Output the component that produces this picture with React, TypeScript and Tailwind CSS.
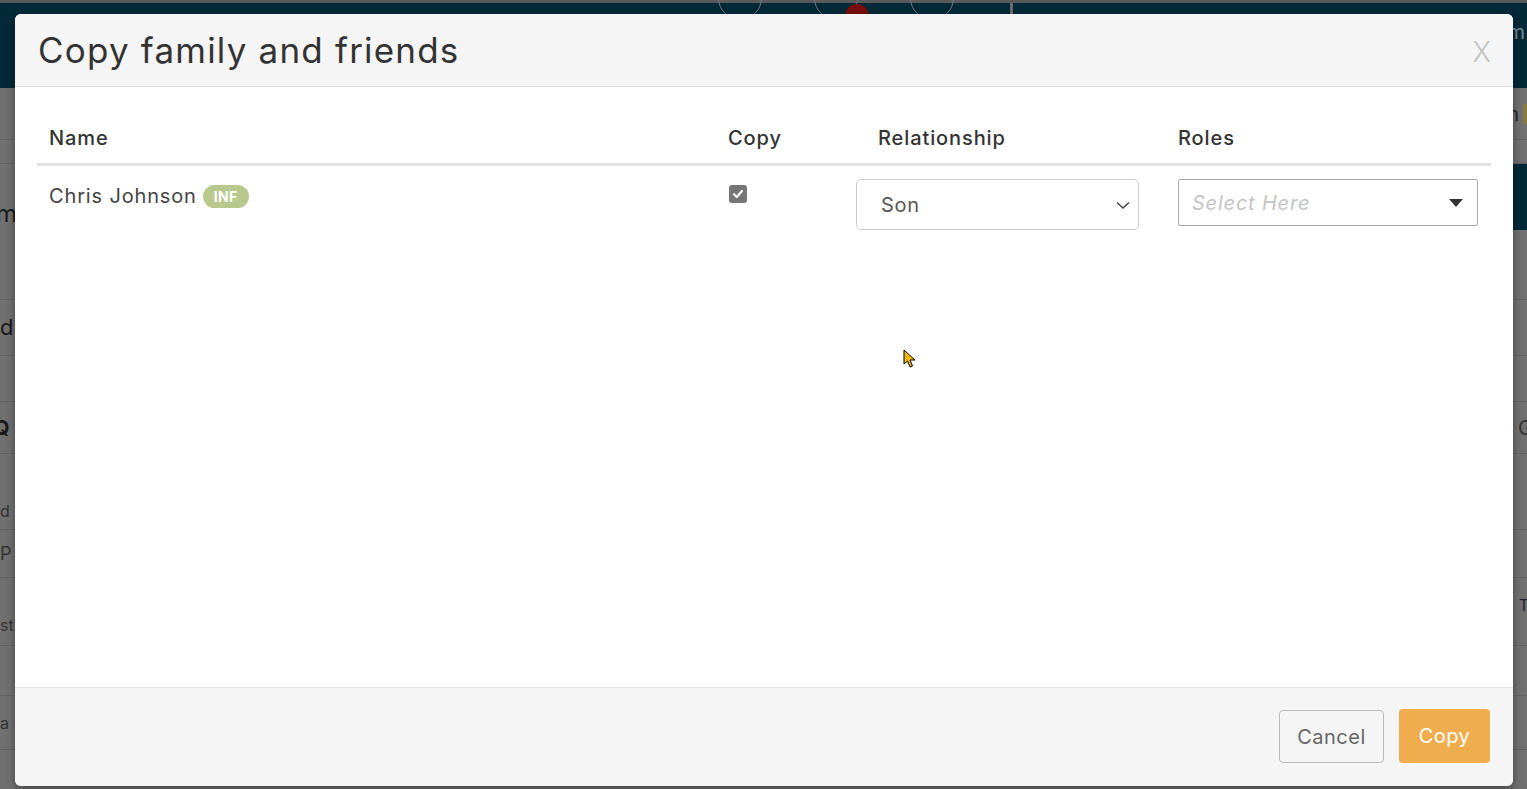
import React from "react";

export default function App() {
  return (
    <div className="relative w-full h-[789px] overflow-hidden bg-[#707070]" style={{ fontFamily: "Inter, 'Open Sans', sans-serif" }}>
      {/* dimmed background page */}
      <div className="h-[88px] bg-[#032837] border-t-[3px] border-[#5a5a5a] flex items-start">
        <div className="ml-[718px] flex gap-[52px] -mt-[27px]">
          <div className="w-[44px] h-[44px] rounded-full border border-[#6b7b82]" />
          <div className="relative w-[44px] h-[44px] rounded-full border border-[#6b7b82]">
            <div className="absolute left-[30px] top-[27px] w-[24px] h-[24px] rounded-full bg-[#7a0d0d]" />
          </div>
          <div className="w-[44px] h-[44px] rounded-full border border-[#6b7b82]" />
        </div>
        <div className="ml-[56px] w-[3px] h-[12px] bg-[#6b6b6b]" />
        <div className="ml-auto mr-[2px] mt-[14px] text-[20px] text-[#7a8a90]">m</div>
      </div>
      <div className="h-[52px] border-b border-[#626262] flex justify-end items-center">
        <span className="text-[20px] text-[#2a2a2a] mr-[4px]">n</span>
        <span className="w-[4px] h-[20px] bg-[#8a7a40]" />
      </div>
      <div className="h-[24px] border-b border-[#626262]" />
      <div className="h-[66px] flex">
        <span className="text-[24px] text-[#1a1a1a] mt-[32px] -ml-[4px]">m</span>
        <div className="ml-auto w-[320px] bg-[#032837]" />
      </div>
      <div className="h-[70px] border-b border-[#626262]" />
      <div className="h-[56px] border-b border-[#626262] flex items-center text-[22px] text-[#1a1a1a]">d</div>
      <div className="h-[46px] border-b border-[#626262]" />
      <div className="h-[52px] border-b border-[#626262] flex items-center justify-between text-[20px] text-[#1a1a1a]">
        <span className="-ml-[6px] font-bold">Q</span>
        <span className="-mr-[6px] text-[#333]">G</span>
      </div>
      <div className="h-[76px] border-b border-[#626262] flex items-end pb-[6px] text-[16px] text-[#333]">d</div>
      <div className="h-[48px] border-b border-[#626262] flex items-center text-[18px] text-[#333]">P</div>
      <div className="h-[68px] border-b border-[#626262] flex items-end pb-[8px] justify-between text-[16px] text-[#333]">
        <span>st</span>
        <span className="-mr-[2px] mb-[20px] text-[#223]">T</span>
      </div>
      <div className="h-[50px] border-b border-[#626262]" />
      <div className="h-[54px] border-b border-[#626262] flex items-center text-[16px] text-[#333]">a</div>

      {/* modal */}
      <div className="absolute left-[15px] top-[14px] w-[1498px] h-[772px] bg-white rounded-[6px] overflow-hidden flex flex-col shadow-[0_3px_9px_rgba(0,0,0,0.4)]">
        <div className="h-[73px] shrink-0 bg-[#f5f5f5] border-b border-[#dddddd] flex items-center justify-between pl-[23px] pr-[22px]">
          <h1 className="text-[35px] font-normal text-[#333333] tracking-[1.2px] leading-none">Copy family and friends</h1>
          <span className="text-[28px] text-[#c2c2c2] leading-none font-light mt-[4px]">X</span>
        </div>
        <div className="flex-1 px-[22px] pt-[36px]">
          <div className="grid grid-cols-[679px_150px_300px_1fr] border-b-[3px] border-[#e2e2e2] h-[43px] text-[20px] font-medium text-[#333333] tracking-[0.9px]">
            <div className="pl-[12px]">Name</div>
            <div className="pl-[12px]">Copy</div>
            <div className="pl-[12px]">Relationship</div>
            <div className="pl-[12px]">Roles</div>
          </div>
          <div className="grid grid-cols-[679px_140px_322px_1fr] pt-[13px]">
            <div className="pl-[12px] flex items-center gap-[6px] h-[30px] mt-[2px]">
              <span className="text-[20px] text-[#444444] tracking-[0.85px]">Chris Johnson</span>
              <span className="h-[23px] px-[11px] rounded-full bg-[#b9c98e] text-white text-[14px] font-bold flex items-center tracking-[0.3px]">INF</span>
            </div>
            <div className="pl-[13px] pt-[6px]">
              <div className="w-[18px] h-[18px] rounded-[3px] bg-[#767676] flex items-center justify-center">
                <svg width="12" height="12" viewBox="0 0 12 12">
                  <path d="M2 6.2 L4.8 9 L10 3" fill="none" stroke="white" strokeWidth="2.2" strokeLinecap="round" strokeLinejoin="round" />
                </svg>
              </div>
            </div>
            <div>
              <div className="w-[283px] h-[51px] border border-[#cccccc] rounded-[5px] flex items-center justify-between pl-[24px] pr-[7px]">
                <span className="text-[20px] text-[#555555] tracking-[0.7px]">Son</span>
                <svg width="16" height="10" viewBox="0 0 16 10">
                  <path d="M2 2.5 L8 8 L14 2.5" fill="none" stroke="#444" strokeWidth="1.5" />
                </svg>
              </div>
            </div>
            <div>
              <div className="w-[300px] h-[47px] border border-[#a9a9a9] rounded-[2px] flex items-center justify-between pl-[13px] pr-[13px]">
                <span className="text-[20px] italic text-[#c4c4c4] tracking-[0.8px]">Select Here</span>
                <svg width="16" height="10" viewBox="0 0 16 10">
                  <path d="M1 1 L15 1 L8 9 Z" fill="#333" />
                </svg>
              </div>
            </div>
          </div>
        </div>
        <div className="h-[99px] shrink-0 bg-[#f5f5f5] border-t border-[#e5e5e5] flex items-start justify-end gap-[15px] pr-[23px] pt-[22px]">
          <button className="w-[105px] h-[53px] border border-[#bbbbbb] rounded-[4px] text-[20px] text-[#666666] bg-[#f5f5f5] tracking-[0.5px]">Cancel</button>
          <button className="w-[91px] h-[54px] -mt-[1px] rounded-[4px] text-[20px] text-white bg-[#f0ad4e] tracking-[0.5px]">Copy</button>
        </div>
      </div>

      {/* cursor */}
      <svg className="absolute left-[903px] top-[349px]" width="14" height="20" viewBox="0 0 14 20">
        <path d="M1 1 L1 15 L4.5 12 L7 18 L9.5 17 L7 11 L12 11 Z" fill="#f5b800" stroke="#000" strokeWidth="1" strokeLinejoin="round" />
      </svg>
    </div>
  );
}
